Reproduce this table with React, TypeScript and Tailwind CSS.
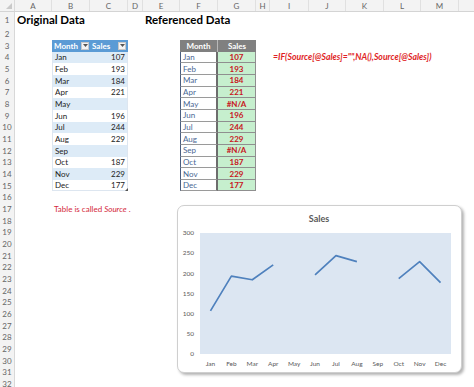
import React from 'react';

const cols: { l: string; c: string }[] = [
  { l: 'A', c: 'w-[37px]' },
  { l: 'B', c: 'w-[38px]' },
  { l: 'C', c: 'w-[38px]' },
  { l: 'D', c: 'w-[15px]' },
  { l: 'E', c: 'w-[37px]' },
  { l: 'F', c: 'w-[38px]' },
  { l: 'G', c: 'w-[38px]' },
  { l: 'H', c: 'w-[14px]' },
  { l: 'I', c: 'w-[39px]' },
  { l: 'J', c: 'w-[37px]' },
  { l: 'K', c: 'w-[38px]' },
  { l: 'L', c: 'w-[37px]' },
  { l: 'M', c: 'w-[38px]' },
  { l: '', c: 'w-[38px]' },
];

const data: [string, number | null][] = [
  ['Jan', 107],
  ['Feb', 193],
  ['Mar', 184],
  ['Apr', 221],
  ['May', null],
  ['Jun', 196],
  ['Jul', 244],
  ['Aug', 229],
  ['Sep', null],
  ['Oct', 187],
  ['Nov', 229],
  ['Dec', 177],
];

function FilterBtn() {
  return (
    <span className="w-[8px] h-[8px] bg-[#f4f4f4] border border-[#c8c8c8] flex items-center justify-center">
      <svg width="5" height="3" viewBox="0 0 5 3">
        <polygon points="0,0 5,0 2.5,3" fill="#555" />
      </svg>
    </span>
  );
}

function Chart() {
  const px0 = 23;
  const pw = 251;
  const py0 = 28;
  const ph = 121;
  const step = pw / 12;
  const xOf = (i: number) => px0 + (i + 0.5) * step;
  const yOf = (v: number) => py0 + ph - (v / 300) * ph;
  const segs: number[][] = [];
  let cur: number[] = [];
  data.forEach((d, i) => {
    if (d[1] === null) {
      if (cur.length) segs.push(cur);
      cur = [];
    } else cur.push(i);
  });
  if (cur.length) segs.push(cur);
  return (
    <div className="absolute left-[177px] top-[205px] w-[285px] h-[168px] rounded-[7px] border border-[#cfcfcf] bg-white shadow-[2px_2px_3px_rgba(0,0,0,0.3)] overflow-hidden">
      <svg width="285" height="168" viewBox="1 1 285 168" className="block">
        <text x="142" y="17" textAnchor="middle" fontSize="9" fontWeight="700" fill="#595959" fontFamily="Lato, sans-serif">
          Sales
        </text>
        <rect x={px0} y={py0} width={pw} height={ph} fill="#dce6f2" />
        {[0, 50, 100, 150, 200, 250, 300].map((v) => (
          <text key={v} x="17" y={yOf(v) + 2.3} textAnchor="end" fontSize="6.5" fill="#595959" fontFamily="Lato, sans-serif">
            {v}
          </text>
        ))}
        {data.map((d, i) => (
          <text key={d[0]} x={xOf(i)} y="161" textAnchor="middle" fontSize="6.5" fill="#595959" fontFamily="Lato, sans-serif">
            {d[0]}
          </text>
        ))}
        {segs.map((s, k) => (
          <polyline
            key={k}
            points={s.map((i) => `${xOf(i)},${yOf(data[i][1] as number)}`).join(' ')}
            fill="none"
            stroke="#4f81bd"
            strokeWidth="1.7"
            strokeLinejoin="round"
          />
        ))}
      </svg>
    </div>
  );
}

export default function App() {
  const rows = Array.from({ length: 32 }, (_, i) => i + 1);
  return (
    <div className="relative w-[474px] h-[387px] overflow-hidden bg-white font-[Lato,sans-serif] text-[#222]">
      {/* Column header */}
      <div className="flex h-[12px] bg-[#f3f3f3] border-b border-[#d4d4d4]">
        <div className="w-[15px] shrink-0 border-r border-[#dadada] relative">
          <svg width="6" height="6" viewBox="0 0 6 6" className="absolute right-[2px] bottom-[2px]">
            <polygon points="6,0 6,6 0,6" fill="#c9c9c9" />
          </svg>
        </div>
        {cols.map((c, i) => (
          <div
            key={i}
            className={`${c.c} shrink-0 border-r border-[#e0e0e0] flex items-center justify-center text-[8px] text-[#666] leading-none`}
          >
            {c.l}
          </div>
        ))}
      </div>

      <div className="flex">
        {/* Row header */}
        <div className="w-[15px] shrink-0 flex flex-col bg-[#f3f3f3] border-r border-[#d8d8d8]">
          {rows.map((r, i) => (
            <div
              key={r}
              className={`${i === 0 ? 'h-[16.3px]' : 'h-[11.66px]'} shrink-0 flex items-center justify-center text-[8px] text-[#666] leading-none`}
            >
              {r}
            </div>
          ))}
        </div>

        {/* Sheet */}
        <div className="grid grid-cols-[37px_38px_38px_15px_37px_38px_38px_14px_39px_37px_38px_37px_38px_1fr] grid-rows-[16.3px_repeat(31,11.66px)] flex-1">
          <div className="col-start-1 col-span-4 row-start-1 flex items-center pl-[2px] whitespace-nowrap text-[11.5px] font-bold text-black leading-none">
            Original Data
          </div>
          <div className="col-start-5 col-span-4 row-start-1 flex items-center pl-[2px] whitespace-nowrap text-[11.5px] font-bold text-black leading-none">
            Referenced Data
          </div>

          {/* Original table */}
          <div className="col-start-2 col-span-2 row-start-3 row-span-13 flex flex-col">
            <div className="h-[11.66px] shrink-0 flex bg-[#5b9bd5] text-white font-bold text-[8px] leading-none">
              <div className="w-[38px] flex items-center justify-between pl-[2px] pr-[1px]">
                <span>Month</span>
                <FilterBtn />
              </div>
              <div className="w-[38px] flex items-center justify-between pl-[2px] pr-[2px]">
                <span>Sales</span>
                <FilterBtn />
              </div>
            </div>
            {data.map((d, i) => (
              <div
                key={d[0]}
                className={`h-[11.66px] shrink-0 flex text-[8px] leading-none border-x border-[#dde6f0] ${i % 2 === 0 ? 'bg-[#ddebf7]' : 'bg-white'} ${i === 11 ? 'border-b relative' : ''}`}
              >
                <div className="w-[38px] flex items-center pl-[2px]">{d[0]}</div>
                <div className="w-[38px] flex items-center justify-end pr-[2px]">{d[1] ?? ''}</div>
                {i === 11 && (
                  <svg width="3" height="3" viewBox="0 0 3 3" className="absolute right-[-1px] bottom-[-1px]">
                    <polygon points="3,0 3,3 0,3" fill="#555" />
                  </svg>
                )}
              </div>
            ))}
          </div>

          {/* Referenced table */}
          <div className="col-start-6 col-span-2 row-start-3 row-span-13 flex flex-col">
            <div className="h-[11.66px] shrink-0 flex bg-[#808080] text-white font-bold text-[8px] leading-none">
              <div className="w-[38px] flex items-center justify-center border-r border-[#b8b8b8]">Month</div>
              <div className="w-[38px] flex items-center justify-center">Sales</div>
            </div>
            {data.map((d) => (
              <div key={d[0]} className="h-[11.66px] shrink-0 flex text-[8px] leading-none">
                <div className="w-[38px] flex items-center pl-[2px] text-[#4a6794] border-l border-l-[#4a5e80] border-b border-[#9a9a9a] border-r-2 border-r-[#6d6d6d]">
                  {d[0]}
                </div>
                <div className="w-[38px] flex items-center justify-center bg-[#c6efce] text-[#c8141c] font-bold border-b border-r border-[#8f8f8f]">
                  {d[1] ?? '#N/A'}
                </div>
              </div>
            ))}
          </div>

          {/* Formula */}
          <div className="col-start-9 col-span-5 row-start-4 flex items-center pl-[3px] whitespace-nowrap text-[8.7px] font-bold italic text-[#e01e26] leading-none">
            =IF(Source[@Sales]="",NA(),Source[@Sales])
          </div>

          {/* Note */}
          <div className="col-start-2 col-span-4 row-start-17 flex items-center pl-[2px] whitespace-nowrap text-[8px] text-[#d4283a] leading-none">
            Table is called&nbsp;<span className="italic">Source</span>&nbsp;.
          </div>
        </div>
      </div>

      <Chart />
    </div>
  );
}
